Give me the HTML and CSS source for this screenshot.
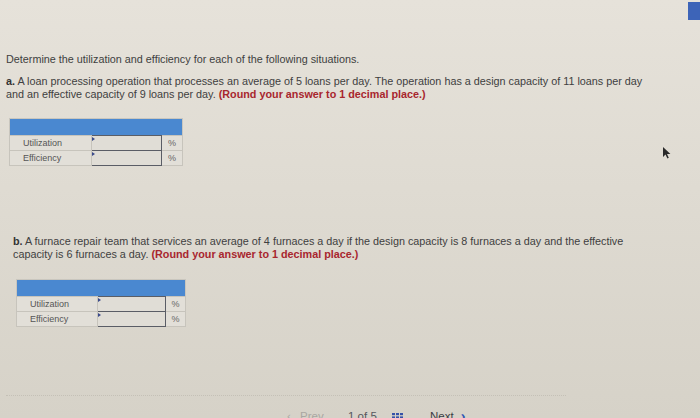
FILE: index.html
```html
<!DOCTYPE html>
<html>
<head>
<meta charset="utf-8">
<link rel="stylesheet" href="styles.css">
</head>
<body>
<div class="page">
  <div class="tab"></div>
  <p class="intro">Determine the utilization and efficiency for each of the following situations.</p>

  <p class="q qa"><b class="lbl">a.</b> A loan processing operation that processes an average of 5 loans per day. The operation has a design capacity of 11 loans per day and an effective capacity of 9 loans per day. <span class="round">(Round your answer to 1 decimal place.)</span></p>

  <table class="grid g1">
    <colgroup><col class="c1"><col class="c2"><col class="c3"></colgroup>
    <tr class="head"><td colspan="3"></td></tr>
    <tr><td class="name">Utilization</td><td class="inp"><span class="mark"></span></td><td class="pct">%</td></tr>
    <tr><td class="name">Efficiency</td><td class="inp"><span class="mark"></span></td><td class="pct">%</td></tr>
  </table>

  <p class="q qb"><b class="lbl">b.</b> A furnace repair team that services an average of 4 furnaces a day if the design capacity is 8 furnaces a day and the effective capacity is 6 furnaces a day. <span class="round">(Round your answer to 1 decimal place.)</span></p>

  <table class="grid g2">
    <colgroup><col class="c1"><col class="c2"><col class="c3"></colgroup>
    <tr class="head"><td colspan="3"></td></tr>
    <tr><td class="name">Utilization</td><td class="inp"><span class="mark"></span></td><td class="pct">%</td></tr>
    <tr><td class="name">Efficiency</td><td class="inp"><span class="mark"></span></td><td class="pct">%</td></tr>
  </table>

  <div class="rule"></div>

  <div class="nav">
    <span class="prev"><span class="lt">&lsaquo;</span>Prev</span>
    <span class="count">1 of 5</span>
    <span class="gridwrap"><svg class="gridicon" width="11" height="9" viewBox="0 0 11 9"><g fill="#3552a8"><rect x="0" y="0" width="3" height="2.2"/><rect x="4" y="0" width="3" height="2.2"/><rect x="8" y="0" width="3" height="2.2"/><rect x="0" y="3.4" width="3" height="2.2"/><rect x="4" y="3.4" width="3" height="2.2"/><rect x="8" y="3.4" width="3" height="2.2"/><rect x="0" y="6.8" width="3" height="2.2"/><rect x="4" y="6.8" width="3" height="2.2"/><rect x="8" y="6.8" width="3" height="2.2"/></g></svg></span>
    <span class="next">Next<span class="chev">&rsaquo;</span></span>
  </div>

  <svg class="cursor" width="9" height="12" viewBox="0 0 9 12"><path d="M1 0 L1 10 L3.5 7.6 L5.4 11.5 L6.8 10.8 L5 7 L8.4 7 Z" fill="#2a2a2a"/></svg>
</div>
</body>
</html>
```
FILE: styles.css
```css
html, body {
  margin: 0;
  padding: 0;
}
body {
  width: 700px;
  height: 418px;
  overflow: hidden;
  background: linear-gradient(180deg, #e6e2da 0%, #dfdbd2 45%, #d6d2c8 100%);
  font-family: "Liberation Sans", Arial, sans-serif;
  color: #404040;
}
.page {
  position: relative;
  height: 418px;
  padding: 0 6px;
  box-sizing: border-box;
  display: flex;
  flex-direction: column;
  align-items: flex-start;
}
.tab {
  position: absolute;
  right: 0;
  top: 2px;
  width: 12px;
  height: 18px;
  background: #3d64b8;
}
p {
  margin: 0;
  font-size: 10.8px;
  line-height: 13px;
}
.intro {
  margin-top: 53px;
}
.qa {
  margin-top: 9px;
  width: 645px;
}
.qb {
  margin-top: 69px;
  margin-left: 7px;
  width: 618px;
}
.lbl {
  font-weight: bold;
  color: #333;
}
.round {
  font-weight: bold;
  color: #a8262e;
}
.grid {
  border-collapse: collapse;
  table-layout: fixed;
  border: 1px solid #c9c6be;
  font-size: 9px;
  color: #555;
}
.g1 {
  margin-top: 17px;
  margin-left: 3px;
  width: 173px;
}
.g1 .c1 { width: 82px; }
.g1 .c2 { width: 70px; }
.g1 .c3 { width: 21px; }
.g2 {
  margin-top: 18px;
  margin-left: 10px;
  width: 169px;
}
.g2 .c1 { width: 81px; }
.g2 .c2 { width: 68px; }
.g2 .c3 { width: 20px; }
.grid td {
  padding: 0;
  border: 1px solid #c7c4bc;
  background: #e2dfd8;
  height: 14px;
}
.grid .head td {
  background: #4a88d0;
  height: 16px;
  border: none;
}
.grid .name {
  padding-left: 13px;
  text-align: left;
}
.grid .inp {
  border: 1.5px solid #5a5d66;
  position: relative;
  background: #e0ddd6;
}
.mark {
  position: absolute;
  left: 0;
  top: 1px;
  width: 0;
  height: 0;
  border-left: 3px solid #3a4a8a;
  border-top: 2px solid transparent;
  border-bottom: 2px solid transparent;
}
.pct {
  text-align: center;
  color: #666;
}
.rule {
  margin-top: 68px;
  border-top: 1px dotted #c4c0b6;
  width: 560px;
}
.nav {
  margin-top: 14px;
  margin-left: 281px;
  display: flex;
  align-items: flex-start;
  font-size: 11.5px;
  line-height: 13px;
  color: #55575e;
}
.prev {
  color: #a9a7a2;
  width: 61px;
  display: flex;
}
.lt {
  width: 13px;
}
.count {
  width: 44px;
}
.gridwrap {
  width: 38px;
  padding-top: 2px;
}
.next {
  color: #3b3d44;
  display: flex;
}
.chev {
  color: #2f55b5;
  font-weight: bold;
  font-size: 14px;
  margin-left: 7px;
}
.cursor {
  position: absolute;
  left: 662px;
  top: 147px;
}
```
